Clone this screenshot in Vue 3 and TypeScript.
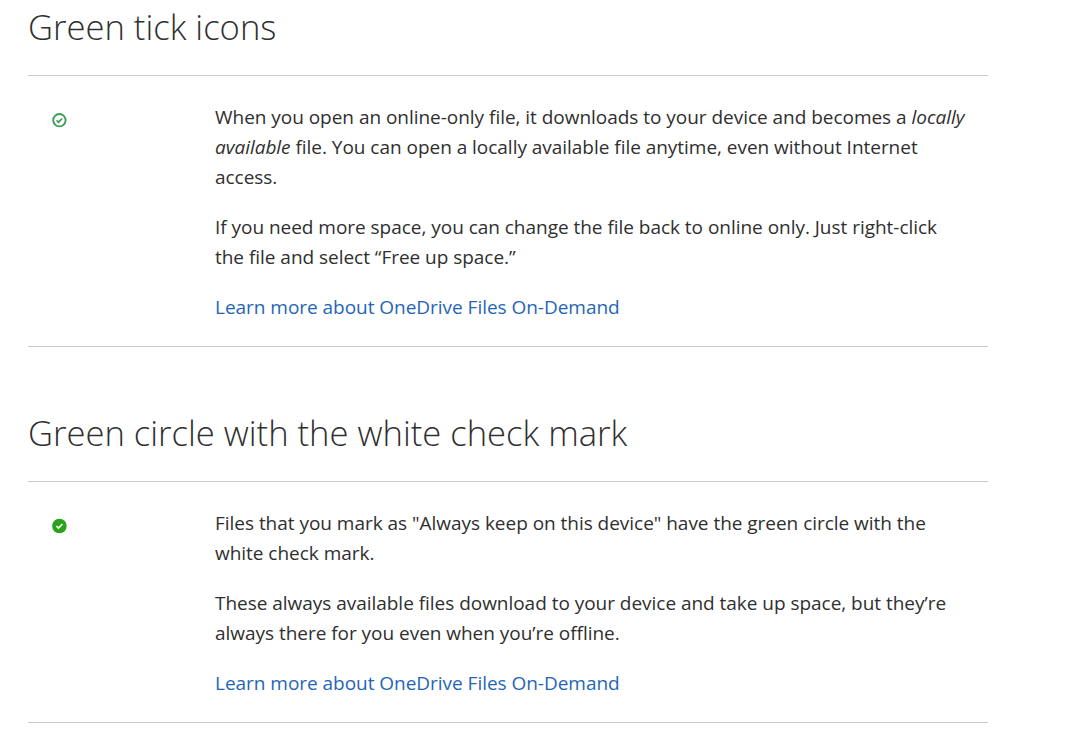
<script setup lang="ts">
interface Part { text: string; em?: boolean }
interface Section { title: string; solid: boolean; paras: Part[][] }
const sections: Section[] = [
  {
    title: 'Green tick icons',
    solid: false,
    paras: [
      [
        { text: 'When you open an online-only file, it downloads to your device and becomes a ' },
        { text: 'locally available', em: true },
        { text: ' file. You can open a locally available file anytime, even without Internet access.' }
      ],
      [{ text: 'If you need more space, you can change the file back to online only. Just right-click the file and select “Free up space.”' }]
    ]
  },
  {
    title: 'Green circle with the white check mark',
    solid: true,
    paras: [
      [{ text: 'Files that you mark as "Always keep on this device" have the green circle with the white check mark.' }],
      [{ text: 'These always available files download to your device and take up space, but they’re always there for you even when you’re offline.' }]
    ]
  }
]
</script>

<template>
  <div class="page">
    <section v-for="s in sections" :key="s.title" class="section">
      <h2 class="title">{{ s.title }}</h2>
      <div class="row">
        <div class="iconcell">
          <svg v-if="!s.solid" width="16" height="16" viewBox="0 0 16 16" fill="none">
            <circle cx="8.4" cy="8.2" r="6.2" stroke="#3a9f56" stroke-width="1.9" />
            <path d="M5.6 8.3 7.6 10.2 11.2 6.5" stroke="#3a9f56" stroke-width="1.7" />
          </svg>
          <svg v-else width="16" height="16" viewBox="0 0 16 16" fill="none">
            <circle cx="8.4" cy="8" r="7.3" fill="#2aa31c" />
            <path d="M5.4 8.1 7.5 10.1 11.4 6" stroke="#fff" stroke-width="1.7" />
          </svg>
        </div>
        <div class="body">
          <p v-for="(p, i) in s.paras" :key="i" class="para">
            <template v-for="(part, j) in p" :key="j">
              <em v-if="part.em">{{ part.text }}</em>
              <template v-else>{{ part.text }}</template>
            </template>
          </p>
          <p class="para"><a class="link" href="#">Learn more about OneDrive Files On-Demand</a></p>
        </div>
      </div>
    </section>
  </div>
</template>

<style>
html, body { margin: 0; background: #fff; overflow: hidden; }
</style>

<style scoped>
.page {
  width: 960px;
  margin-left: 28px;
  font-family: "Open Sans", "Liberation Sans", sans-serif;
  color: #2f2f2f;
}
.section { margin-bottom: 59px; }
.title {
  margin: 0;
  height: 76px;
  box-sizing: border-box;
  padding-top: 4px;
  font-size: 34.6px;
  line-height: 46px;
  font-weight: 300;
  color: #2f2f2f;
  border-bottom: 1px solid #ccc;
}
.row {
  display: flex;
  padding: 26px 0 24px;
  border-bottom: 1px solid #ccc;
}
.iconcell { width: 187px; flex: none; padding-left: 23px; box-sizing: border-box; padding-top: 10px; }
.iconcell svg { display: block; }
.body { flex: 1; padding-right: 20px; }
.para { margin: 0 0 20px; font-size: 19px; line-height: 30px; letter-spacing: -0.03px; }
.para:last-child { margin-bottom: 0; }
.link { color: #1f66b8; text-decoration: none; }
</style>
